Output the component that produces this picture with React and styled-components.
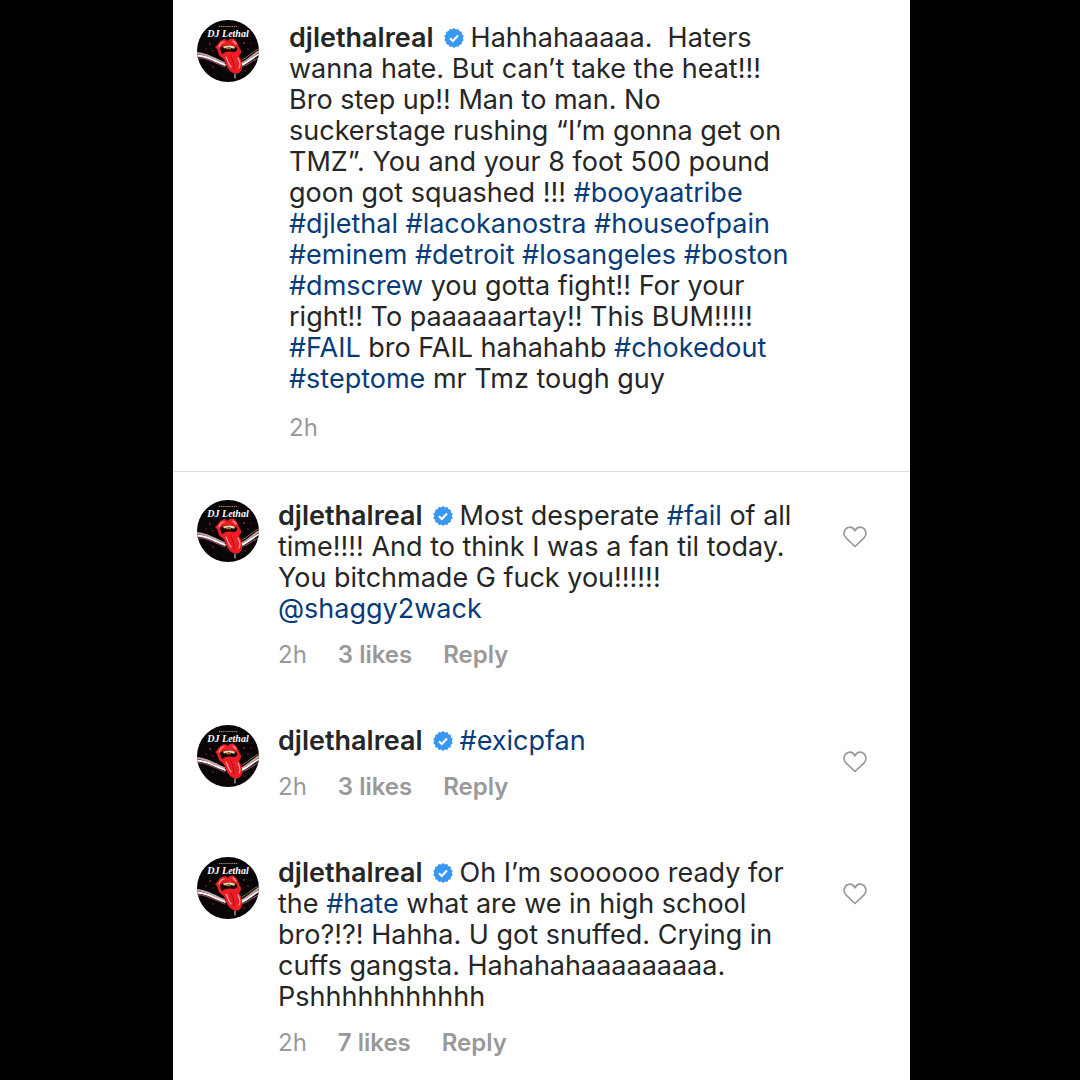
import React, { useId } from "react";
import styled, { createGlobalStyle } from "styled-components";

const GlobalStyle = createGlobalStyle`
  *, *::before, *::after { box-sizing: border-box; }
  body {
    margin: 0;
    background: #000;
    color: #262626;
    font-family: Inter, "Liberation Sans", sans-serif;
  }
`;

const Page = styled.div`
  display: flex;
  min-height: 100vh;
  padding: 0 170px 0 173px;
`;

const Panel = styled.main`
  flex: 1;
  min-width: 0;
  background: #fff;
`;

const Caption = styled.article`
  display: flex;
  gap: 30px;
  padding: 20px 24px 31px;
  border-bottom: 1px solid #dedede;
`;

const Comments = styled.ul`
  display: flex;
  flex-direction: column;
  gap: 58px;
  margin: 0;
  padding: 28px 43px 24px 24px;
  list-style: none;
`;

const Comment = styled.li`
  display: flex;
  gap: 19px;
`;

const Picture = styled.svg`
  flex: none;
  display: block;
  width: 62px;
  height: 62px;
`;

const Body = styled.div`
  flex: 1;
  min-width: 0;
`;

const CaptionBody = styled(Body)`
  padding-top: 2px;
`;

const Message = styled.p`
  margin: 0;
  font-size: 27px;
  line-height: 31px;
  white-space: pre;
`;

const UserName = styled.a`
  color: inherit;
  font-weight: 600;
  text-decoration: none;
`;

const Tag = styled.a`
  color: #083c78;
  text-decoration: none;
`;

const Badge = styled.svg`
  width: 20px;
  height: 20px;
  margin: 0 7px 0 10px;
  vertical-align: -1px;
`;

const Meta = styled.div`
  display: flex;
  gap: 31px;
  margin-top: ${({ $roomy }) => ($roomy ? "22px" : "19px")};
  color: #999;
  font-size: 24px;
  line-height: 24px;
`;

const MetaButton = styled.button`
  padding: 0;
  border: 0;
  background: none;
  color: inherit;
  font: inherit;
  font-weight: 600;
  cursor: pointer;
`;

const LikeButton = styled.button`
  flex: none;
  align-self: flex-start;
  margin-top: 26px;
  padding: 0;
  border: 0;
  background: none;
  color: #999;
  cursor: pointer;

  svg { display: block; }
`;

function Avatar() {
  const id = useId();
  return (
    <Picture viewBox="0 0 62 62" role="img" aria-label="djlethalreal">
      <clipPath id={id}><circle cx="31" cy="31" r="31" /></clipPath>
      <g clipPath={`url(#${id})`}>
        <rect width="62" height="62" fill="#090507" />
        <g fill="none" strokeLinecap="round">
          <path d="M-2 33C8 33 16 38 27 43M42 44C49 43 52 37 64 30" stroke="#c5a2a6" strokeWidth="2" />
          <path d="M-2 35.5C9 35 17 41 28 45M42 46C50 44 54 38 64 33" stroke="#fff" strokeWidth="1.8" />
          <path d="M-2 38C10 37 18 43 28 47M42 48C50 46 55 41 64 36" stroke="#8d4655" strokeWidth="1.1" />
          <path d="M45 40C50 38 54 32 64 28" stroke="#b8a64c" strokeWidth=".7" />
        </g>
        <g fill="#9e2439">
          <circle cx="13" cy="24" r="1" /><circle cx="9" cy="29" r=".7" />
          <circle cx="16" cy="31" r=".8" /><circle cx="47" cy="23" r=".9" />
          <circle cx="51" cy="29" r=".8" /><circle cx="16" cy="47" r=".8" />
          <circle cx="48" cy="51" r=".8" /><circle cx="54" cy="23" r=".6" />
        </g>
        <path d="M22 6.5H41" stroke="#a08670" strokeWidth="1" strokeDasharray="1.4 .7" />
        <path d="M18 27C21 25 22 21 25 20C27 19 29 19 31 21C33 18 36 18 38 20C41 22 41 26 43 29C45 31 44 34 42 36C45 41 47 48 43 52C39 56 33 52 30 47C28 42 28 39 24 37C20 34 22 30 18 27Z" fill="#ee1d25" />
        <path d="M23 28C27 25 35 24 40 28C41 30 39 32 36 32C33 31 29 31 25 34C23 32 24 30 23 28Z" fill="#170305" />
        <path d="M26 26.8C30 25 35 25 38 27L37 29C34 27 30 27 27 28.5Z" fill="#e9dbac" />
        <path d="M29 28.7H34" stroke="#c18d2a" strokeWidth="1" />
        <path d="M33 35C36 39 37 44 37 49" stroke="#a90d1b" strokeWidth="1" fill="none" />
        <path d="M41 38C43 42 44 45 42 48M29 37C31 40 31 44 34 47M22 27Q24 22 27 22M36 21L39 24" stroke="#ffb2ac" strokeWidth="1.1" fill="none" strokeLinecap="round" />
        <path d="M38 54V58" stroke="#e9d6d8" strokeWidth="1" strokeLinecap="round" />
        <text x="31" y="17" textAnchor="middle" fill="#fff" fontFamily="Liberation Serif, serif" fontSize="10" fontStyle="italic" fontWeight="700">DJ Lethal</text>
      </g>
    </Picture>
  );
}

const badgePoints = Array.from({ length: 28 }, (_, i) => {
  const radius = i % 2 ? 8.7 : 10;
  const angle = (i * Math.PI) / 14;
  return `${10 + radius * Math.sin(angle)},${10 - radius * Math.cos(angle)}`;
}).join(" ");

function User() {
  return (
    <>
      <UserName href="#djlethalreal">djlethalreal</UserName>
      <Badge viewBox="0 0 20 20" role="img" aria-label="Verified">
        <polygon points={badgePoints} fill="#3897f0" />
        <path d="M6 10.3L8.8 13L14 7.5" fill="none" stroke="#fff" strokeWidth="2" />
      </Badge>
    </>
  );
}

function RichText({ text }) {
  return text.split(/([#@]\w+)/).map((part, i) =>
    i % 2 ? <Tag key={i} href={`#${part.slice(1)}`}>{part}</Tag> : part
  );
}

const caption = `Hahhahaaaaa.  Haters
wanna hate. But can’t take the heat!!!
Bro step up!! Man to man. No
suckerstage rushing “I’m gonna get on
TMZ”. You and your 8 foot 500 pound
goon got squashed !!! #booyaatribe
#djlethal #lacokanostra #houseofpain
#eminem #detroit #losangeles #boston
#dmscrew you gotta fight!! For your
right!! To paaaaaartay!! This BUM!!!!!
#FAIL bro FAIL hahahahb #chokedout
#steptome mr Tmz tough guy`;

const comments = [
  {
    text: `Most desperate #fail of all
time!!!! And to think I was a fan til today.
You bitchmade G fuck you!!!!!!
@shaggy2wack`,
    likes: 3,
  },
  { text: "#exicpfan", likes: 3 },
  {
    text: `Oh I’m soooooo ready for
the #hate what are we in high school
bro?!?! Hahha. U got snuffed. Crying in
cuffs gangsta. Hahahahaaaaaaaaa.
Pshhhhhhhhhhh`,
    likes: 7,
  },
];

export default function App() {
  return (
    <>
      <GlobalStyle />
      <Page>
        <Panel>
          <Caption>
            <Avatar />
            <CaptionBody>
              <Message><User /><RichText text={caption} /></Message>
              <Meta $roomy><time>2h</time></Meta>
            </CaptionBody>
          </Caption>
          <Comments>
            {comments.map(({ text, likes }) => (
              <Comment key={text}>
                <Avatar />
                <Body>
                  <Message><User /><RichText text={text} /></Message>
                  <Meta>
                    <time>2h</time>
                    <MetaButton type="button">{likes} likes</MetaButton>
                    <MetaButton type="button">Reply</MetaButton>
                  </Meta>
                </Body>
                <LikeButton type="button" aria-label="Like comment">
                  <svg width="24" height="22" viewBox="0 0 24 22" fill="none" stroke="currentColor" strokeWidth="1.7" strokeLinejoin="round">
                    <path d="M12 20.5L3.2 12.2C-.3 8.8.8 3 5 1.5C8 .5 10.6 2 12 4.8C13.4 2 16 .5 19 1.5C23.2 3 24.3 8.8 20.8 12.2Z" />
                  </svg>
                </LikeButton>
              </Comment>
            ))}
          </Comments>
        </Panel>
      </Page>
    </>
  );
}
